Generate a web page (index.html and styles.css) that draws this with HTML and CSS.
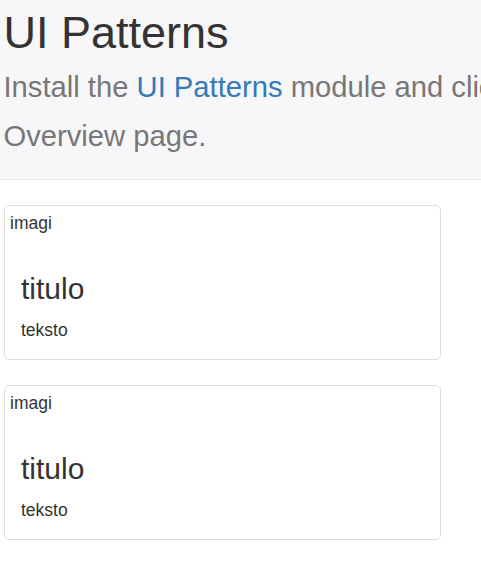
FILE: index.html
```html
<!DOCTYPE html>
<html lang="en">
<head>
<meta charset="utf-8">
<title>UI Patterns</title>
<link rel="stylesheet" href="styles.css">
</head>
<body>
<header class="jumbotron">
  <h1 class="jumbotron-title">UI Patterns</h1>
  <p class="lead">Install the <a href="#" class="lead-link">UI Patterns</a> module and click on the Patterns Overview page.</p>
</header>
<main class="cards">
  <div class="thumbnail">
    <div class="thumb-image">imagi</div>
    <div class="caption">
      <h3 class="caption-title">titulo</h3>
      <p class="caption-text">teksto</p>
    </div>
  </div>
  <div class="thumbnail">
    <div class="thumb-image">imagi</div>
    <div class="caption">
      <h3 class="caption-title">titulo</h3>
      <p class="caption-text">teksto</p>
    </div>
  </div>
</main>
</body>
</html>
```
FILE: styles.css
```css
html, body {
  margin: 0;
  padding: 0;
  background: #fff;
}
body {
  font-family: "Liberation Sans", Arial, Helvetica, sans-serif;
  font-size: 17.5px;
  line-height: 25px;
  color: #333;
  overflow: hidden;
}
.jumbotron {
  background: #f7f7f9;
  border-bottom: 1px solid #e7e7ea;
  padding: 8px 0 18px 3.5px;
  overflow: hidden;
}
.jumbotron-title {
  margin: 0;
  font-size: 45px;
  font-weight: 400;
  line-height: 49.5px;
  color: #333;
  white-space: nowrap;
}
.lead {
  margin: 5.3px 0 0;
  font-size: 29.2px;
  line-height: 49px;
  color: #777;
  width: 760px;
}
.lead-link {
  color: #337ab7;
  text-decoration: none;
}
.cards {
  padding: 25px 0 0 4px;
}
.thumbnail {
  width: 437px;
  box-sizing: border-box;
  border: 1px solid #ddd;
  border-radius: 5px;
  padding: 5px;
  margin-bottom: 25px;
  background: #fff;
}
.thumb-image {
  line-height: 25px;
}
.caption {
  padding: 11.25px 11px;
}
.caption-title {
  margin: 25px 0 12.5px;
  font-size: 30px;
  font-weight: 400;
  line-height: 33px;
  color: #333;
}
.caption-text {
  margin: 0;
  line-height: 25px;
}
```
